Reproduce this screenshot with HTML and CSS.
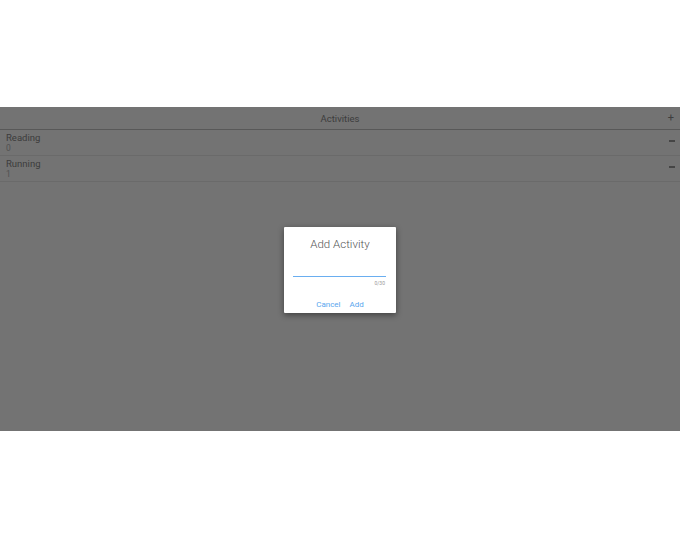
FILE: index.html
```html
<!DOCTYPE html>
<html>
<head>
<meta charset="utf-8">
<link rel="stylesheet" href="styles.css">
</head>
<body>
<div class="page">
  <div class="app">
    <header class="bar">
      <span class="bar-title">Activities</span>
      <span class="bar-add">+</span>
    </header>
    <ul class="list">
      <li class="item">
        <div class="item-text">
          <div class="item-name">Reading</div>
          <div class="item-count">0</div>
        </div>
        <span class="item-remove"></span>
      </li>
      <li class="item">
        <div class="item-text">
          <div class="item-name">Running</div>
          <div class="item-count">1</div>
        </div>
        <span class="item-remove"></span>
      </li>
    </ul>
    <div class="overlay">
      <div class="dialog">
        <div class="dialog-title">Add Activity</div>
        <div class="field">
          <div class="field-line"></div>
          <div class="field-counter">0/30</div>
        </div>
        <div class="actions">
          <span class="btn">Cancel</span>
          <span class="btn">Add</span>
        </div>
      </div>
    </div>
  </div>
</div>
</body>
</html>
```

FILE: styles.css
```css
html, body {
  margin: 0;
  padding: 0;
  background: #ffffff;
  font-family: Roboto, "Noto Sans", sans-serif;
}
.page {
  width: 680px;
  height: 538px;
  display: flex;
  align-items: center;
}
.app {
  position: relative;
  width: 680px;
  height: 324px;
  background: #ffffff;
  overflow: hidden;
}
.bar {
  height: 22px;
  border-bottom: 1px solid #c4c4c4;
  display: flex;
  align-items: center;
  justify-content: center;
  position: relative;
}
.bar-title {
  font-size: 9.5px;
  color: #8a8a8a;
}
.bar-add {
  position: absolute;
  right: 6px;
  top: 4px;
  font-size: 11px;
  color: #8a8a8a;
}
.list {
  list-style: none;
  margin: 0;
  padding: 0;
}
.item {
  height: 25px;
  border-bottom: 1px solid #ececec;
  display: flex;
  align-items: center;
  padding: 0 5px 0 6px;
}
.item-text {
  flex: 1;
}
.item-name {
  font-size: 9.5px;
  line-height: 11px;
  color: #888;
}
.item-count {
  font-size: 8.5px;
  line-height: 10px;
  color: #b5b5b5;
}
.item-remove {
  width: 6px;
  height: 2px;
  background: #9a9a9a;
  margin-top: -4px;
}
.overlay {
  position: absolute;
  inset: 0;
  background: rgba(0, 0, 0, 0.55);
  display: flex;
  align-items: center;
  justify-content: center;
}
.dialog {
  width: 112px;
  height: 86px;
  margin-top: 2px;
  background: #fff;
  box-shadow: 0 2px 6px rgba(0, 0, 0, 0.45);
  border-radius: 1px;
  box-sizing: border-box;
  display: flex;
  flex-direction: column;
}
.dialog-title {
  text-align: center;
  font-size: 11.5px;
  font-weight: 300;
  color: #555;
  margin-top: 10px;
  line-height: 14px;
}
.field {
  margin: 25px 10px 0 9px;
}
.field-line {
  height: 1px;
  background: #6aaef0;
}
.field-counter {
  text-align: right;
  font-size: 5px;
  color: #999;
  line-height: 8px;
  padding-top: 2px;
  margin-right: 1px;
}
.actions {
  display: flex;
  justify-content: center;
  gap: 9px;
  margin-top: 13px;
}
.btn {
  font-size: 8px;
  color: #5aa6ee;
  line-height: 10px;
}
```
